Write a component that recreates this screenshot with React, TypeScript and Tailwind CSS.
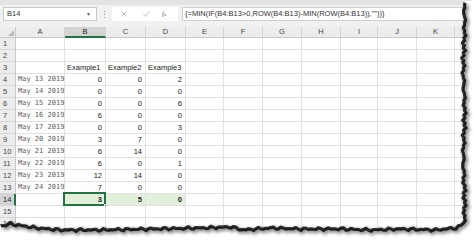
import React from "react";

const COLS = ["A", "B", "C", "D", "E", "F", "G", "H", "I", "J", "K", ""];

const DATES = [
  "May 13 2019",
  "May 14 2019",
  "May 15 2019",
  "May 16 2019",
  "May 17 2019",
  "May 20 2019",
  "May 21 2019",
  "May 22 2019",
  "May 23 2019",
  "May 24 2019",
];

const VALUES = [
  [0, 0, 2],
  [0, 0, 0],
  [0, 0, 6],
  [6, 0, 0],
  [0, 0, 3],
  [3, 7, 0],
  [6, 14, 0],
  [6, 0, 1],
  [12, 14, 0],
  [7, 0, 0],
];

const FORMULA = '{=MIN(IF(B4:B13>0,ROW(B4:B13)-MIN(ROW(B4:B13)),""))}';

// profile of the torn bottom edge: [x, y]
const BOTTOM: [number, number][] = [
  [0, 225], [10, 223], [35, 227], [60, 229], [100, 229], [150, 228],
  [200, 227], [230, 226], [242, 229], [270, 227], [300, 228], [340, 228],
  [370, 229], [400, 228], [435, 229], [455, 227], [462, 224],
];

function edgePoints(): [number, number][] {
  const pts: [number, number][] = [];
  let k = 0;
  for (let x = 0; x <= 462; x += 2.5) {
    while (k < BOTTOM.length - 2 && BOTTOM[k + 1][0] < x) k++;
    const [x0, y0] = BOTTOM[k];
    const [x1, y1] = BOTTOM[k + 1];
    const t = Math.min(1, Math.max(0, (x - x0) / (x1 - x0)));
    const y = y0 + (y1 - y0) * t + Math.sin(x * 1.7) * 0.8 + Math.sin(x * 0.53) * 0.7;
    pts.push([x, y]);
  }
  for (let y = 222; y >= 0; y -= 2.5) {
    const x = 463 + Math.sin(y * 1.3) * 0.9 + Math.sin(y * 0.41) * 0.8 + Math.sin(y * 0.07) * 0.6;
    pts.push([x, y]);
  }
  return pts;
}

const TornEdge = () => {
  const pts = edgePoints();
  const line = pts.map((p, i) => `${i ? "L" : "M"}${p[0].toFixed(1)},${p[1].toFixed(1)}`).join(" ");
  const outside = `M0,240 ${line.replace(/^M/, "L")} L474,0 L474,240 Z`;
  return (
    <svg className="absolute inset-0 pointer-events-none" width="474" height="240" viewBox="0 0 474 240">
      <defs>
        <filter id="soft" x="-10%" y="-10%" width="120%" height="120%">
          <feGaussianBlur stdDeviation="1.8" />
        </filter>
        <filter id="rim" x="-10%" y="-10%" width="120%" height="120%">
          <feGaussianBlur stdDeviation="0.6" />
        </filter>
      </defs>
      <path d={outside} fill="#ffffff" />
      <path d={line} transform="translate(2.5,2.5)" fill="none" stroke="#000" strokeOpacity="0.4" strokeWidth="5" filter="url(#soft)" />
      <path d={line} transform="translate(1,1)" fill="none" stroke="#1f1f1f" strokeWidth="3" filter="url(#rim)" />
      <path d={line} fill="none" stroke="#333" strokeWidth="1" />
    </svg>
  );
};

const HeaderCell = ({ label, active }: { label: string; active?: boolean }) => (
  <div
    className={
      "h-[11px] flex items-center justify-center text-[7.5px] leading-none border-r border-[#d0d0d0] " +
      (active
        ? "bg-[#d4d4d4] text-[#222] border-b-2 border-b-[#217346]"
        : "bg-[#ececec] text-[#444] border-b border-b-[#c8c8c8]")
    }
  >
    {label}
  </div>
);

const RowHead = ({ n, active }: { n: number; active?: boolean }) => (
  <div
    className={
      "h-[12px] pl-[3px] flex items-center text-[7.5px] leading-none border-b border-[#d6d6d6] " +
      (active ? "bg-[#d4d4d4] text-[#222] border-r-2 border-r-[#217346]" : "bg-[#ececec] text-[#444] border-r border-r-[#c8c8c8]")
    }
  >
    {n}
  </div>
);

const Cell = ({
  children,
  right,
  mono,
  bold,
  green,
  selected,
}: {
  children?: React.ReactNode;
  right?: boolean;
  mono?: boolean;
  bold?: boolean;
  green?: boolean;
  selected?: boolean;
}) => (
  <div
    className={
      "relative h-[12px] flex items-center whitespace-nowrap border-r border-b border-[#e1e1e1] leading-none " +
      (right ? "justify-end pr-[3px] " : "pl-[2px] ") +
      (mono ? "font-['DejaVu_Sans_Mono',monospace] text-[7px] text-[#5a5a5a] " : "text-[7.5px] text-[#222] ") +
      (bold ? "font-bold text-[#111] " : "") +
      (green ? "bg-[#e2efda] " : "bg-white ")
    }
  >
    {children}
    {selected && (
      <>
        <div className="absolute -left-[2px] -top-[2px] -right-px -bottom-px border-2 border-[#217346]" />
        <div className="absolute -right-[3px] -bottom-[3px] w-[4px] h-[4px] bg-[#217346] border border-white" />
      </>
    )}
  </div>
);

export default function App() {
  const rows: React.ReactNode[] = [];
  for (let r = 1; r <= 17; r++) {
    const cells: React.ReactNode[] = [<RowHead key="h" n={r} active={r === 14} />];
    COLS.forEach((c, ci) => {
      let content: React.ReactNode = null;
      let right = false;
      let mono = false;
      let bold = false;
      let green = false;
      let selected = false;
      if (r === 3 && ci >= 1 && ci <= 3) content = `Example${ci}`;
      if (r >= 4 && r <= 13) {
        if (ci === 0) {
          content = DATES[r - 4];
          mono = true;
        } else if (ci <= 3) {
          content = VALUES[r - 4][ci - 1];
          right = true;
        }
      }
      if (r === 14 && ci >= 1 && ci <= 3) {
        content = [3, 5, 0][ci - 1];
        right = true;
        bold = true;
        green = true;
        selected = ci === 1;
      }
      cells.push(
        <Cell key={ci} right={right} mono={mono} bold={bold} green={green} selected={selected}>
          {content}
        </Cell>
      );
    });
    rows.push(<React.Fragment key={r}>{cells}</React.Fragment>);
  }

  return (
    <div className="relative w-[474px] h-[240px] overflow-hidden bg-white font-['Liberation_Sans',Arial,sans-serif]">
      {/* formula bar */}
      <div className="h-[27px] bg-[#f1f1f1] flex flex-col">
        <div className="h-[5px] bg-[#e3e3e3]" />
        <div className="mt-[2px] h-[14px] flex items-stretch">
          <div className="ml-[3px] w-[94px] bg-white border border-[#c9c9c9] flex items-center justify-between pl-[3px] pr-[6px]">
            <span className="text-[7.5px] text-[#333] leading-none">B14</span>
            <span className="text-[6px] text-[#666] leading-none">▾</span>
          </div>
          <div className="ml-[7px] w-[1px] flex flex-col justify-center gap-[2px]">
            <div className="w-[1px] h-[1px] bg-[#9a9a9a]" />
            <div className="w-[1px] h-[1px] bg-[#9a9a9a]" />
            <div className="w-[1px] h-[1px] bg-[#9a9a9a]" />
          </div>
          <div className="ml-[7px] w-[66px] bg-white flex items-center">
            <svg className="ml-[9px]" width="6" height="6" viewBox="0 0 6 6">
              <path d="M0.5 0.5 L5.5 5.5 M5.5 0.5 L0.5 5.5" stroke="#b3b3b3" strokeWidth="0.9" />
            </svg>
            <svg className="ml-[16px]" width="7" height="6" viewBox="0 0 7 6">
              <path d="M0.5 3.2 L2.5 5.3 L6.5 0.6" stroke="#b3b3b3" strokeWidth="0.9" fill="none" />
            </svg>
            <span className="ml-[12px] text-[7px] italic text-[#555] font-['Liberation_Serif',serif] leading-none">
              f<span className="text-[5px]">x</span>
            </span>
          </div>
          <div className="ml-[4px] flex-1 bg-white border border-[#d0d0d0] flex items-center pl-[2px]">
            <span className="text-[7.5px] text-[#333] leading-none whitespace-nowrap">{FORMULA}</span>
          </div>
        </div>
      </div>

      {/* sheet */}
      <div className="grid grid-cols-[16px_49px_41px_40px_40px_38px_39px_39px_39px_37px_39px_38px_40px]">
        <div className="h-[11px] bg-[#ececec] border-r border-b border-[#c8c8c8] relative">
          <svg className="absolute right-[1px] bottom-[1px]" width="6" height="6" viewBox="0 0 6 6">
            <path d="M6 0 L6 6 L0 6 Z" fill="#b8b8b8" />
          </svg>
        </div>
        {COLS.map((c, i) => (
          <HeaderCell key={i} label={c} active={c === "B"} />
        ))}
        {rows}
      </div>

      <TornEdge />
    </div>
  );
}
